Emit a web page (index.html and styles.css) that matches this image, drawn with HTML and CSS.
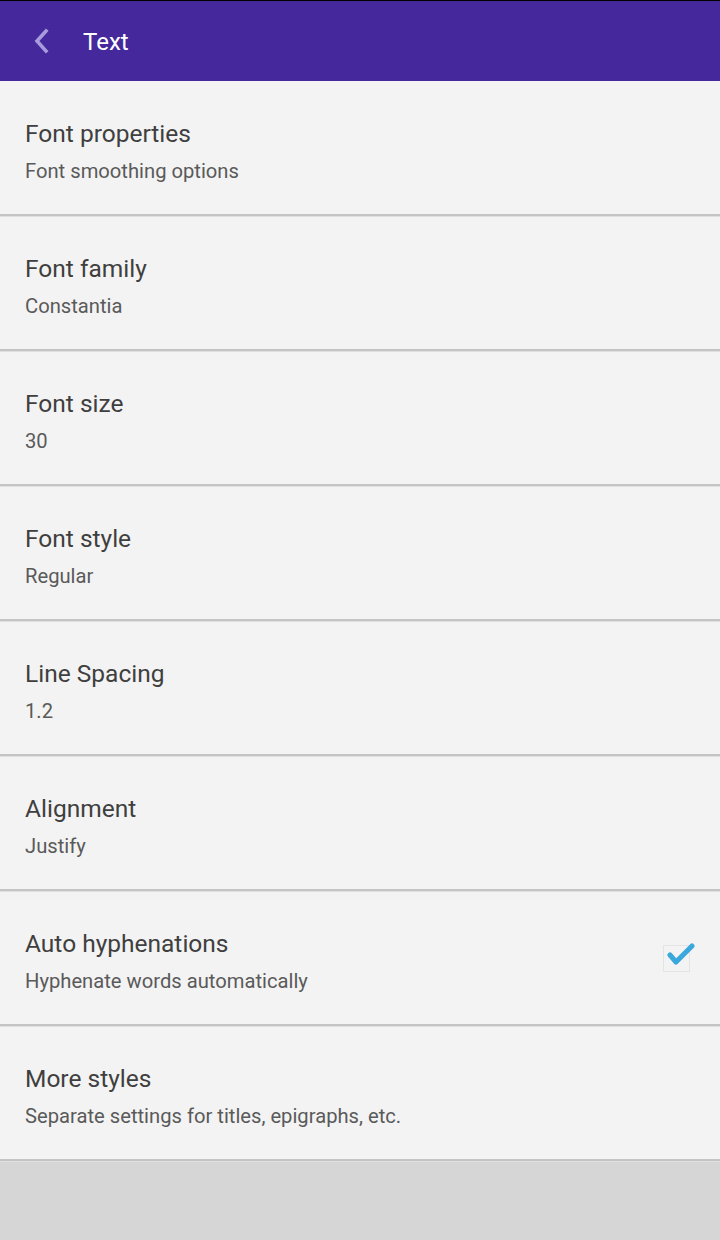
FILE: index.html
```html
<!DOCTYPE html>
<html lang="en">
<head>
    <meta charset="UTF-8">
    <meta name="viewport" content="width=device-width, initial-scale=1.0">
    <title>Text</title>
    <link rel="stylesheet" href="styles.css">
</head>
<body>
    <div class="toolbar">
        <svg class="back" width="20" height="28" viewBox="0 0 20 28">
            <path d="M15 4 L6 14 L15 24" fill="none" stroke="#a99bdc" stroke-width="3.6" stroke-linecap="square"/>
        </svg>
        <span class="toolbar-title">Text</span>
    </div>

    <div class="list">
        <div class="item">
            <div class="item-text">
                <div class="title">Font properties</div>
                <div class="summary">Font smoothing options</div>
            </div>
        </div>
        <div class="item">
            <div class="item-text">
                <div class="title">Font family</div>
                <div class="summary">Constantia</div>
            </div>
        </div>
        <div class="item">
            <div class="item-text">
                <div class="title">Font size</div>
                <div class="summary">30</div>
            </div>
        </div>
        <div class="item">
            <div class="item-text">
                <div class="title">Font style</div>
                <div class="summary">Regular</div>
            </div>
        </div>
        <div class="item">
            <div class="item-text">
                <div class="title">Line Spacing</div>
                <div class="summary">1.2</div>
            </div>
        </div>
        <div class="item">
            <div class="item-text">
                <div class="title">Alignment</div>
                <div class="summary">Justify</div>
            </div>
        </div>
        <div class="item">
            <div class="item-text">
                <div class="title">Auto hyphenations</div>
                <div class="summary">Hyphenate words automatically</div>
            </div>
            <div class="checkbox">
                <svg width="34" height="30" viewBox="0 0 34 30">
                    <path d="M7 12 L13 19 L29 3" fill="none" stroke="#3aa8dc" stroke-width="5" stroke-linecap="round" stroke-linejoin="round"/>
                </svg>
            </div>
        </div>
        <div class="item">
            <div class="item-text">
                <div class="title">More styles</div>
                <div class="summary">Separate settings for titles, epigraphs, etc.</div>
            </div>
        </div>
    </div>
</body>
</html>
```

FILE: styles.css
```css
body {
    margin: 0;
    font-family: Roboto, "Noto Sans", sans-serif;
    background-color: #d6d6d6;
    height: 1240px;
}
.toolbar {
    height: 80px;
    border-top: 1px solid #000;
    background-color: #44289c;
    display: flex;
    align-items: center;
    padding-left: 31px;
}
.back {
    margin-right: 32px;
    margin-top: -1px;
}
.toolbar-title {
    color: #fff;
    font-size: 24px;
    margin-top: 1px;
}
.list {
    background-color: #f3f3f3;
}
.item {
    height: 133px;
    border-bottom: 2px solid #c4c4c4;
    box-shadow: 0 1px 0 #e0e0e0;
    display: flex;
    align-items: flex-start;
    padding: 0 25px;
    position: relative;
}
.item-text {
    flex: 1;
    padding-top: 38px;
}
.title {
    font-size: 24.5px;
    line-height: 30px;
    color: #3f3f3f;
}
.summary {
    font-size: 20.2px;
    line-height: 24px;
    color: #5a5a5a;
    margin-top: 10px;
}
.checkbox {
    margin-top: 54px;
    margin-right: 5px;
    width: 25px;
    height: 25px;
    border: 1px solid #e4e4e4;
    position: relative;
}
.checkbox svg {
    position: absolute;
    left: -1px;
    top: -3px;
}
```
